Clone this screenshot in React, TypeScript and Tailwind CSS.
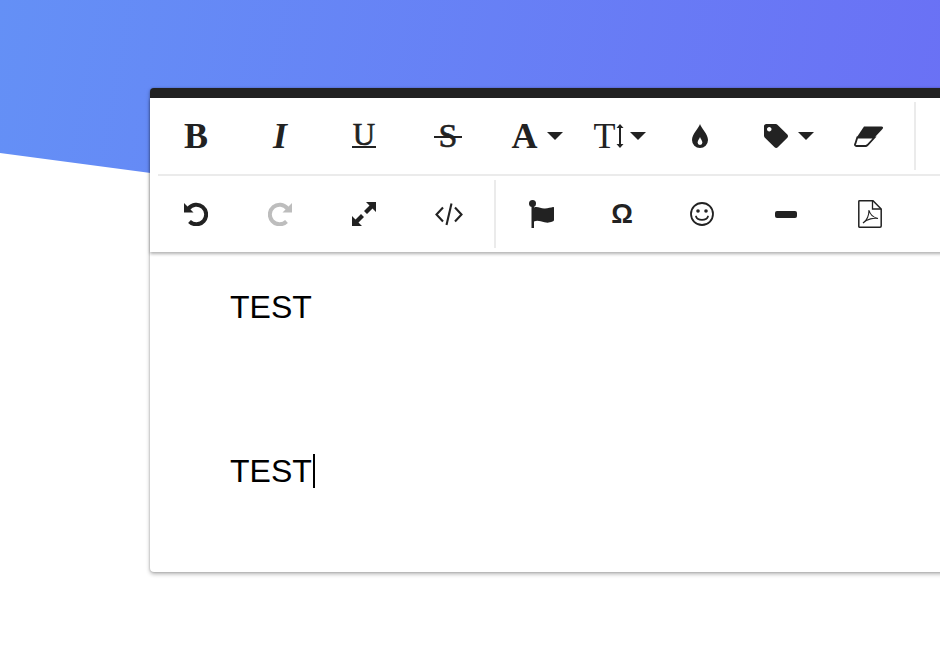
import React from 'react';
import { FaTag } from 'react-icons/fa';

const serif = 'font-["Liberation_Serif",serif]';

const Btn: React.FC<{ w?: string; children: React.ReactNode }> = ({ w = 'w-[84px]', children }) => (
  <div className={`${w} h-full flex items-center justify-center shrink-0 text-[#222222]`}>{children}</div>
);

const Caret = () => <span className="block w-0 h-0 border-x-8 border-x-transparent border-t-8 border-t-[#222222]" />;

const Glyph: React.FC<{ className?: string; children: React.ReactNode }> = ({ className = '', children }) => (
  <span className={`${serif} font-bold leading-none ${className}`}>{children}</span>
);

const TextHeight = () => (
  <svg width="12" height="24" viewBox="0 0 12 24" fill="#222222" className="ml-[-2px]">
    <path d="M6 0 9.500 4H7v16h2.500L6 24l-3.500-4H5V4H2.500z" />
  </svg>
);

const Tint = () => (
  <svg width="16" height="24" viewBox="0 0 16 24">
    <path d="M8 0c1 4 8 10 8 16a8 8 0 0 1-16 0C0 10 7 4 8 0z" fill="#222222" />
    <path d="M8 13c.6 2 2.400 3.600 2.400 5.600a2.400 2.400 0 0 1-4.800 0c0-2 1.800-3.600 2.400-5.600z" fill="#fff" />
  </svg>
);

const Eraser = () => (
  <svg width="30" height="21" viewBox="0 0 30 21">
    <path d="M10 .5h17.500c1.500 0 2 1 1.200 2.200L21 11H3z" fill="#222222" />
    <path d="M3.300 11.500H20.500l-7 7.500c-.5.5-1 1-1.800 1H2.500C1 20 .5 18.800 1.400 17.600z" fill="#fff" stroke="#222222" strokeWidth="1.800" />
  </svg>
);

// same circular arrow for undo and redo, redo is the mirrored one
const Turn: React.FC<{ color?: string; flip?: boolean }> = ({ color = '#222222', flip }) => (
  <svg width="24" height="24" viewBox="0 0 24 24" className={flip ? 'scale-x-[-1]' : ''}>
    <path d="M0 1v9.500h9.500z" fill={color} />
    <path d="M4.600 6.500A9.800 9.800 0 1 1 5.500 19.500" fill="none" stroke={color} strokeWidth="4" />
  </svg>
);

const Code = () => (
  <svg width="28" height="24" viewBox="0 0 28 24" fill="none" stroke="#222222" strokeWidth="2.100">
    <path d="M8 5.500 1.500 12.500 8 19.500" />
    <path d="M20 5.500l6.500 7-6.500 7" />
    <path d="M16.500 1.500 11.500 23" />
  </svg>
);

const Flag = () => (
  <svg width="26" height="28" viewBox="0 0 26 28" fill="#222222">
    <circle cx="3.500" cy="3.500" r="3.500" />
    <rect x="2.500" y="4" width="2.500" height="24" />
    <path d="M5 7.500c4-1.500 7 1.500 11 1 3-.3 6-1 8-1.500 1 0 1 .5 1 1v12c0 .8-.5 1-1.500 1.500-3 1.200-5 1.500-8 .8-4-1-7-2.300-10.500-.8z" />
  </svg>
);

const Smile = () => (
  <svg width="24" height="24" viewBox="0 0 24 24" fill="none" stroke="#222222">
    <circle cx="12" cy="12" r="11" strokeWidth="1.800" />
    <circle cx="8" cy="9" r="1.800" fill="#222222" stroke="none" />
    <circle cx="16" cy="9" r="1.800" fill="#222222" stroke="none" />
    <path d="M6 14.500c1.500 4.500 10.500 4.500 12 0" strokeWidth="1.800" strokeLinecap="round" />
  </svg>
);

const Pdf = () => (
  <svg width="24" height="28" viewBox="0 0 24 28" fill="none" stroke="#222222">
    <path d="M1.500.800H15L23.200 9v17c0 .7-.5 1.200-1.200 1.200H1.500C.900 27.200.800 26.700.800 26V1.500C.800 1 1 .800 1.500.800z" strokeWidth="1.500" />
    <path d="M14.500 1v8h8.500" strokeWidth="1.300" />
    <path d="M11 10c.800 4 3 7 9 8.500-4-.8-11 .3-15 4.500 3-2 6-7 6-13z" strokeWidth="1.100" />
  </svg>
);

export default function App() {
  return (
    <div className="relative h-[662px] w-[940px] overflow-hidden bg-white font-['Liberation_Sans',sans-serif]">
      {/* angled gradient behind the editor */}
      <div className="absolute inset-x-0 top-0 h-[300px] bg-[linear-gradient(100deg,#6490f6,#6a70f5)] [clip-path:polygon(0_0,100%_0,100%_278px,0_153px)]" />

      <div className="relative pt-[88px] pl-[150px]">
        <div className="w-[900px] rounded-[4px] border-t-10 border-[#222222] bg-white shadow-[0_2px_4px_rgba(0,0,0,0.3),0_0_2px_rgba(0,0,0,0.25)]">
          <div className="shadow-[0_2px_3px_rgba(0,0,0,0.3)]">
            {/* first toolbar row */}
            <div className="flex h-[76px] items-center pl-1">
              <Btn><Glyph className="text-[36px]">B</Glyph></Btn>
              <Btn><Glyph className="text-[36px] italic">I</Glyph></Btn>
              <Btn>
                <span className="relative flex h-6 w-6 justify-center">
                  <Glyph className="-mt-[5px] text-[31px] font-normal [-webkit-text-stroke:0.6px_#222222]">U</Glyph>
                  <span className="absolute inset-x-0 bottom-0 h-0.5 bg-[#222222]" />
                </span>
              </Btn>
              <Btn>
                <span className="relative flex h-6 w-7 justify-center">
                  <Glyph className="-mt-[5px] text-[34px] font-normal [-webkit-text-stroke:0.6px_#222222]">S</Glyph>
                  <span className="absolute inset-x-0 top-[12px] h-0.5 bg-[#222222]" />
                </span>
              </Btn>
              <Btn w="w-[86px]">
                <div className="flex items-center gap-[9px] pl-[8px]"><Glyph className="text-[36px]">A</Glyph><Caret /></div>
              </Btn>
              <Btn w="w-[82px]">
                <div className="flex items-center gap-[4px] pl-[5px]">
                  <div className="flex items-center">
                    <span className={`${serif} text-[36px] leading-none`}>T</span>
                    <TextHeight />
                  </div>
                  <Caret />
                </div>
              </Btn>
              <Btn><Tint /></Btn>
              <Btn>
                <div className="flex items-center gap-2.5 pl-[10px]"><FaTag size={24} /><Caret /></div>
              </Btn>
              <Btn w="w-[86px]"><Eraser /></Btn>
              <div className="ml-[2px] h-[68px] w-0.5 bg-[#ebebeb] shrink-0" />
            </div>
            <div className="ml-2 h-0.5 bg-[#ebebeb]" />
            {/* second toolbar row */}
            <div className="flex h-[76px] items-center pl-1">
              <Btn><Turn /></Btn>
              <Btn><Turn color="#bdbdbd" flip /></Btn>
              <Btn>
                <svg width="24" height="24" viewBox="0 0 24 24" fill="#222222">
                  <path d="M14 0h10v10l-3.500-3.500-5.500 5.500-3-3 5.500-5.500zM10 24H0V14l3.500 3.500 5.500-5.500 3 3-5.500 5.500z" />
                </svg>
              </Btn>
              <Btn w="w-[84px] pl-[1px]"><Code /></Btn>
              <div className="ml-[4px] h-[68px] w-0.5 bg-[#ebebeb] shrink-0" />
              <Btn w="w-[84px] ml-[5px] pr-[2px]"><Flag /></Btn>
              <Btn w="w-[74px]"><span className="text-[27px] font-bold leading-none">Ω</span></Btn>
              <Btn w="w-[86px]"><Smile /></Btn>
              <Btn w="w-[82px]"><span className="block h-[7px] w-[22px] rounded-[2px] bg-[#222222]" /></Btn>
              <Btn w="w-[84px] ml-px"><Pdf /></Btn>
            </div>
          </div>
          {/* editing area */}
          <div className="flex h-[320px] flex-col pl-20 pt-[37px] text-[32px] leading-9 text-black">
            <p>TEST</p>
            <p className="mt-[128px] flex items-center">
              TEST<span className="ml-px h-[34px] w-0.5 bg-black" />
            </p>
          </div>
        </div>
      </div>
    </div>
  );
}
